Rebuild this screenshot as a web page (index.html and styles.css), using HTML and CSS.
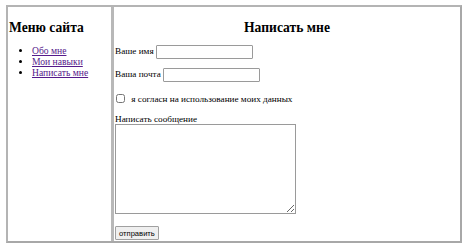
FILE: index.html
```html
<!DOCTYPE html>
<html lang="ru">
<head>
<meta charset="utf-8">
<title>Написать мне</title>
<link rel="stylesheet" href="styles.css">
</head>
<body>
<div class="layout">
  <div class="side">
    <h2 class="title side-title">Меню сайта</h2>
    <ul class="menu">
      <li><a href="#about">Обо мне</a></li>
      <li><a href="#skills">Мои навыки</a></li>
      <li><a href="#write">Написать мне</a></li>
    </ul>
  </div>
  <div class="main">
    <h2 class="title center">Написать мне</h2>
    <form class="form">
      <p class="row">Ваше имя <input class="field" type="text"></p>
      <p class="row">Ваша почта <input class="field" type="text"></p>
      <p class="row check"><input class="box" type="checkbox"> я согласн на использование моих данных</p>
      <p class="row msg">Написать сообщение<br><textarea class="area"></textarea></p>
      <p class="row send"><button class="btn" type="button">отправить</button></p>
    </form>
  </div>
</div>
</body>
</html>
```
FILE: styles.css
```css
html, body {
  background: #fff;
}
body {
  margin: 5px 12px 0 6px;
  font-family: "Liberation Serif", "Times New Roman", serif;
  font-size: 9.2px;
  color: #000;
}
.layout {
  display: grid;
  grid-template-columns: 106px 1fr;
  width: 452px;
  border: 2px solid #b4b4b4;
  border-bottom-color: #a8a8a8;
  border-right-color: #a8a8a8;
}
.side {
  border-right: 3px solid #b8b8b8;
  padding: 1px 2px 1px 1px;
}
.main {
  padding: 1px 1px 1px 1px;
}
.title {
  font-size: 13.6px;
  font-weight: bold;
  margin: 11px 0 9px;
  line-height: 17px;
}
.side-title {
  margin-bottom: 9px;
}
.center {
  text-align: center;
}
.menu {
  margin: 0;
  padding-left: 23px;
  line-height: 11px;
  font-size: 9.6px;
}
.menu a {
  color: #551a8b;
}
.form {
  margin: 0;
}
.row {
  margin: 0 0 9px;
}
.field {
  width: 93px;
  height: 12px;
  padding: 0 1px;
  border: 1px solid #9a9a9a;
  border-radius: 1px;
  vertical-align: middle;
  font-size: 9px;
}
.check {
  margin-top: 12px;
  margin-bottom: 0;
  line-height: 10px;
}
.box {
  width: 9px;
  height: 9px;
  margin: 0 4px 0 1px;
  vertical-align: -1px;
}
.msg {
  margin-top: 11px;
  margin-bottom: 0;
  line-height: 9px;
}
.area {
  display: block;
  width: 177px;
  height: 86px;
  margin: 0;
  padding: 1px;
  border: 1px solid #9a9a9a;
  font-size: 9px;
}
.send {
  margin-top: 12px;
  margin-bottom: 0;
  line-height: 14px;
}
.btn {
  display: block;
  font-family: "Liberation Sans", Arial, sans-serif;
  font-size: 7.6px;
  height: 14px;
  padding: 0 3px;
  border: 1px solid #a0a0a0;
  background: #efefef;
  color: #000;
  border-radius: 1px;
}
```
